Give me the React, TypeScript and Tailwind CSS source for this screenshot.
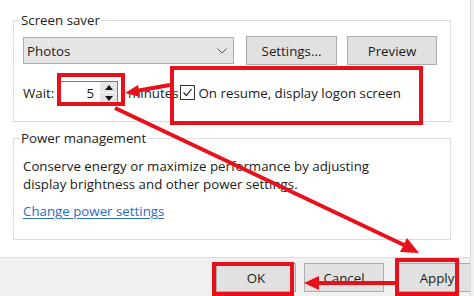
import React from "react";

const font = { fontFamily: '"Open Sans", "Noto Sans", Arial, sans-serif' };

function Btn({ children, className = "" }: { children: React.ReactNode; className?: string }) {
  return (
    <div
      className={
        "flex h-[29px] shrink-0 items-center justify-center border border-[#adadad] bg-[#e1e1e1] text-[13.3px] text-[#1b1b1b] " +
        className
      }
    >
      {children}
    </div>
  );
}

export default function App() {
  return (
    <div
      className="relative h-[296px] w-[474px] overflow-hidden bg-[#f0f0f0] text-[13.3px] leading-[18px] text-[#1b1b1b]"
      style={font}
    >
      <div className="flex h-[296px] w-[471px] flex-col overflow-hidden border-r border-[#dadada] bg-white">
        <div className="flex flex-col pl-[13px] pr-[19px]">
          <fieldset className="mt-[10px] h-[112px] border border-[#dcdcdc] px-[9px]">
            <legend className="ml-[-3px] px-[1px] text-[13.3px] leading-[20px]">Screen saver</legend>
            <div className="mt-[6px] flex items-center">
              <div className="flex h-[27px] w-[211px] items-center justify-between border border-[#adadad] bg-[#e5e5e5] pl-[3px] pr-[6px]">
                <span>Photos</span>
                <svg width="10" height="6" viewBox="0 0 10 6">
                  <path d="M0.5 0.5 L5 5 L9.5 0.5" fill="none" stroke="#555" strokeWidth="1" />
                </svg>
              </div>
              <Btn className="ml-[12px] w-[91px]">Settings...</Btn>
              <Btn className="ml-[10px] w-[90px]">Preview</Btn>
            </div>
            <div className="mt-[16px] flex items-center">
              <span className="w-[37px]">Wait:</span>
              <div className="flex h-[23px] w-[58px] border border-[#7a7a7a] bg-white">
                <div className="flex flex-1 items-center justify-end pr-[6px]">5</div>
                <div className="flex w-[17px] flex-col gap-[1px] bg-white">
                  <div className="flex flex-1 items-center justify-center bg-[#e5e5e5]">
                    <svg width="8" height="5" viewBox="0 0 8 5">
                      <path d="M0 5 L4 0 L8 5 Z" fill="#111" />
                    </svg>
                  </div>
                  <div className="flex flex-1 items-center justify-center bg-[#e5e5e5]">
                    <svg width="8" height="5" viewBox="0 0 8 5">
                      <path d="M0 0 L4 5 L8 0 Z" fill="#111" />
                    </svg>
                  </div>
                </div>
              </div>
              <span className="ml-[10px]">minutes</span>
              <div className="ml-[1px] flex h-[15px] w-[15px] items-center justify-center border border-[#333] bg-white">
                <svg width="13" height="13" viewBox="0 0 13 13">
                  <path d="M2.5 6.5 L5.5 9.5 L10.5 3" fill="none" stroke="#222" strokeWidth="1.2" />
                </svg>
              </div>
              <span className="ml-[4px]">On resume, display logon screen</span>
            </div>
          </fieldset>
          <fieldset className="mt-[6px] h-[112px] border border-[#dcdcdc] px-[9px]">
            <legend className="ml-[-3px] px-[1px] text-[13.3px] leading-[20px]">Power management</legend>
            <p className="mt-[9px] leading-[18px]">
              Conserve energy or maximize performance by adjusting
              <br />
              display brightness and other power settings.
            </p>
            <a className="mt-[9px] block text-[#2b6cc4] underline underline-offset-2">Change power settings</a>
          </fieldset>
        </div>
        <div className="mt-auto flex h-[39px] items-start border-t border-[#dfdfdf] bg-[#f0f0f0] pl-[216px] pt-[5px]">
          <Btn className="w-[80px] border-[#0078d7]">OK</Btn>
          <Btn className="ml-[8px] w-[80px]">Cancel</Btn>
          <Btn className="ml-[13px] w-[80px]">Apply</Btn>
        </div>
      </div>

      {/* annotation boxes */}
      <div className="absolute left-[57px] top-[73px] h-[33px] w-[68px] border-[4px] border-[#e8101a]" />
      <div className="absolute left-[170px] top-[66px] h-[59px] w-[253px] border-[4px] border-[#e8101a]" />
      <div className="absolute left-[212px] top-[262px] h-[34px] w-[82px] border-[4px] border-[#e8101a]" />
      <div className="absolute left-[395px] top-[258px] h-[38px] w-[64px] border-[4px] border-[#e8101a]" />

      {/* arrows */}
      <svg className="absolute left-0 top-0" width="474" height="296" viewBox="0 0 474 296">
        <g stroke="#e8101a" strokeWidth="4" fill="none">
          <line x1="170" y1="85" x2="136" y2="91" />
          <line x1="115" y1="108" x2="404" y2="245" />
          <line x1="395" y1="283" x2="318" y2="283" />
        </g>
        <g fill="#e8101a">
          <polygon points="125,93 138,85 140,97" />
          <polygon points="419,253 400,252 407,238" />
          <polygon points="304,283 319,276 319,290" />
        </g>
      </svg>
    </div>
  );
}
